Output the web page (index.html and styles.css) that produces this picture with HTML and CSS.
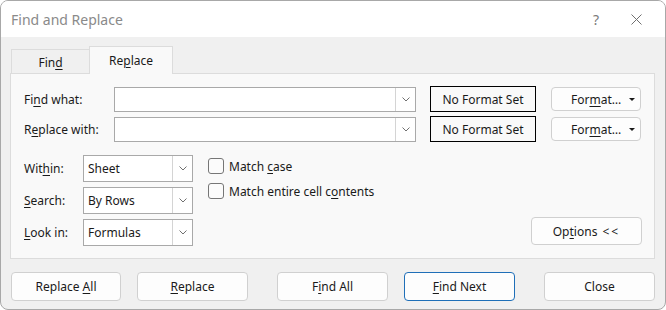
FILE: index.html
```html
<!DOCTYPE html>
<html lang="en">
<head>
    <meta charset="UTF-8">
    <meta name="viewport" content="width=device-width, initial-scale=1.0">
    <title>Find and Replace</title>
    <link rel="stylesheet" href="styles.css">
</head>
<body>
    <div class="window">
        <div class="titlebar">
            <span class="title">Find and Replace</span>
            <span class="title-btn help">?</span>
            <span class="title-btn close">
                <svg width="11" height="11" viewBox="0 0 11 11"><path d="M0.5 0.5 L10.5 10.5 M10.5 0.5 L0.5 10.5" stroke="#6f6f6f" stroke-width="1" fill="none"/></svg>
            </span>
        </div>
        <div class="main">
            <div class="tabs">
                <div class="tab"><span>Fin<u>d</u></span></div>
                <div class="tab active"><span>Re<u>p</u>lace</span></div>
            </div>
            <div class="panel">
                <div class="field-row">
                    <label class="field-label">Fi<u>n</u>d what:</label>
                    <div class="combo">
                        <div class="combo-text"></div>
                        <div class="combo-arrow">
                            <svg width="8" height="5" viewBox="0 0 8 5"><path d="M0.5 0.5 L4 4 L7.5 0.5" stroke="#707070" fill="none"/></svg>
                        </div>
                    </div>
                    <div class="format-box">No Format Set</div>
                    <button class="btn format-btn"><span>For<u>m</u>at…</span><span class="caret"></span></button>
                </div>
                <div class="field-row">
                    <label class="field-label">R<u>e</u>place with:</label>
                    <div class="combo">
                        <div class="combo-text"></div>
                        <div class="combo-arrow">
                            <svg width="8" height="5" viewBox="0 0 8 5"><path d="M0.5 0.5 L4 4 L7.5 0.5" stroke="#707070" fill="none"/></svg>
                        </div>
                    </div>
                    <div class="format-box">No Format Set</div>
                    <button class="btn format-btn"><span>For<u>m</u>at…</span><span class="caret"></span></button>
                </div>
                <div class="options">
                    <div class="selects">
                        <label>Wit<u>h</u>in:</label>
                        <div class="select">
                            <span class="select-text">Sheet</span>
                            <div class="select-arrow">
                                <svg width="8" height="5" viewBox="0 0 8 5"><path d="M0.5 0.5 L4 4 L7.5 0.5" stroke="#707070" fill="none"/></svg>
                            </div>
                        </div>
                        <label><u>S</u>earch:</label>
                        <div class="select">
                            <span class="select-text">By Rows</span>
                            <div class="select-arrow">
                                <svg width="8" height="5" viewBox="0 0 8 5"><path d="M0.5 0.5 L4 4 L7.5 0.5" stroke="#707070" fill="none"/></svg>
                            </div>
                        </div>
                        <label><u>L</u>ook in:</label>
                        <div class="select">
                            <span class="select-text">Formulas</span>
                            <div class="select-arrow">
                                <svg width="8" height="5" viewBox="0 0 8 5"><path d="M0.5 0.5 L4 4 L7.5 0.5" stroke="#707070" fill="none"/></svg>
                            </div>
                        </div>
                    </div>
                    <div class="checks">
                        <div class="check"><span class="box"></span><span>Match <u>c</u>ase</span></div>
                        <div class="check"><span class="box"></span><span>Match entire cell c<u>o</u>ntents</span></div>
                    </div>
                    <button class="btn options-btn">Op<u>t</u>ions <span class="arrows">&lt;&lt;</span></button>
                </div>
            </div>
            <div class="actions">
                <button class="btn action">Replace <u>A</u>ll</button>
                <button class="btn action"><u>R</u>eplace</button>
                <button class="btn action wide-gap">F<u>i</u>nd All</button>
                <button class="btn action default"><u>F</u>ind Next</button>
                <button class="btn action wide-gap">Close</button>
            </div>
        </div>
    </div>
</body>
</html>
```

FILE: styles.css
```css
* {
    margin: 0;
    padding: 0;
    box-sizing: border-box;
    font-family: 'Noto Sans', 'Open Sans', sans-serif;
}
body {
    background-color: #ffffff;
    color: #1a1a1a;
    font-size: 12px;
}
u {
    text-underline-offset: 2px;
    text-decoration-thickness: 1px;
}
.window {
    width: 666px;
    height: 310px;
    border: 1px solid #a8a8a8;
    border-radius: 8px;
    overflow: hidden;
    display: flex;
    flex-direction: column;
    background-color: #f0f0f0;
}
.titlebar {
    height: 36px;
    background-color: #ffffff;
    display: flex;
    align-items: center;
    padding-right: 9px;
}
.title {
    font-size: 14px;
    color: #8a8a8a;
    padding-left: 10px;
    flex: 1;
}
.title-btn {
    width: 40px;
    display: flex;
    justify-content: center;
    align-items: center;
    color: #7a7a7a;
    font-size: 14px;
}
.main {
    flex: 1;
    display: flex;
    flex-direction: column;
    padding-top: 9px;
}
.tabs {
    display: flex;
    align-items: flex-end;
    margin-left: 10px;
    margin-bottom: -1px;
    position: relative;
    z-index: 1;
}
.tab {
    width: 78px;
    height: 25px;
    border: 1px solid #dcdcdc;
    border-bottom: none;
    border-right: none;
    display: flex;
    justify-content: center;
    align-items: center;
    padding-top: 1px;
}
.tab.active {
    width: 84px;
    height: 28px;
    background-color: #f9f9f9;
    border-right: 1px solid #dcdcdc;
    padding-bottom: 2px;
}
.panel {
    margin: 0 10px 0 9px;
    height: 186px;
    border: 1px solid #dcdcdc;
    background-color: #f9f9f9;
    padding: 12px 13px 0 13px;
}
.field-row {
    display: flex;
    align-items: center;
    height: 26px;
    margin-bottom: 4px;
}
.field-label {
    width: 90px;
}
.combo {
    width: 302px;
    height: 25px;
    border: 1px solid #a9a9a9;
    background-color: #ffffff;
    display: flex;
}
.combo-text {
    flex: 1;
}
.combo-arrow, .select-arrow {
    width: 20px;
    border-left: 1px solid #d4d4d4;
    display: flex;
    justify-content: center;
    align-items: center;
}
.format-box {
    width: 106px;
    height: 26px;
    margin-left: 14px;
    border: 1px solid #000000;
    display: flex;
    justify-content: center;
    align-items: center;
}
.btn {
    background-color: #fdfdfd;
    border: 1px solid #d0d0d0;
    border-radius: 4px;
    font-size: 12px;
    color: #1a1a1a;
}
.format-btn {
    width: 90px;
    height: 24px;
    margin-left: 15px;
    display: flex;
    align-items: center;
    padding-left: 19px;
    padding-right: 5px;
}
.caret {
    margin-left: auto;
    width: 0;
    height: 0;
    border-left: 3px solid transparent;
    border-right: 3px solid transparent;
    border-top: 3px solid #1a1a1a;
}
.options {
    display: flex;
    margin-top: 13px;
}
.selects {
    display: grid;
    grid-template-columns: 59px 110px;
    row-gap: 5px;
    align-items: center;
}
.select {
    height: 27px;
    border: 1px solid #a9a9a9;
    background-color: #ffffff;
    display: flex;
}
.select-text {
    flex: 1;
    padding-left: 4px;
    display: flex;
    align-items: center;
}
.checks {
    margin-left: 15px;
    padding-top: 3px;
    display: flex;
    flex-direction: column;
    gap: 9px;
}
.check {
    display: flex;
    align-items: center;
    height: 16px;
}
.box {
    width: 16px;
    height: 16px;
    border: 1px solid #767676;
    border-radius: 3px;
    background-color: #fbfbfb;
    margin-right: 5px;
}
.options-btn {
    width: 111px;
    height: 28px;
    margin-left: auto;
    margin-right: -1px;
    align-self: flex-end;
    margin-bottom: 1px;
}
.arrows {
    letter-spacing: 2px;
    margin-left: 2px;
}
.actions {
    display: flex;
    padding-left: 10px;
    margin-top: 13px;
    gap: 16px;
}
.action {
    width: 111px;
    height: 29px;
}
.action:first-child {
    width: 110px;
}
.wide-gap {
    margin-left: 13px;
}
.default {
    border-color: #1f6fb8;
}
```
